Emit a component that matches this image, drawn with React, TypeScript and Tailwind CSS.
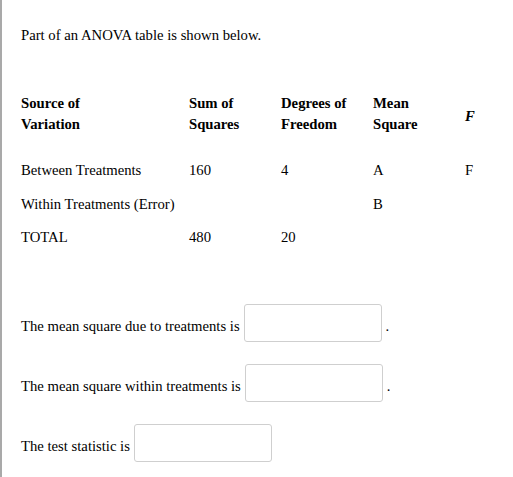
const rows = [
  { source: "Between Treatments", ss: "160", df: "4", ms: "A", f: "F" },
  { source: "Within Treatments (Error)", ss: "", df: "", ms: "B", f: "" },
  { source: "TOTAL", ss: "480", df: "20", ms: "", f: "" },
];

const questions = [
  { label: "The mean square due to treatments is", period: true },
  { label: "The mean square within treatments is", period: true },
  { label: "The test statistic is", period: false },
];

const App = () => {
  return (
    <div className="min-h-[477px] w-[513px] bg-white border-l-2 border-[#a9a9a9] pl-[19px] pt-[25px] text-[14.7px] text-black font-['Liberation_Serif','Times_New_Roman',serif]">
      <p className="leading-[20px]">Part of an ANOVA table is shown below.</p>

      {/* Table header */}
      <div className="mt-[48px] grid grid-cols-[168px_92px_92px_92px_auto] font-bold leading-[21px]">
        <div>
          Source of
          <br />
          Variation
        </div>
        <div>
          Sum of
          <br />
          Squares
        </div>
        <div>
          Degrees of
          <br />
          Freedom
        </div>
        <div>
          Mean
          <br />
          Square
        </div>
        <div className="italic leading-[42px] pt-[2px]">F</div>
      </div>

      {/* Table body */}
      <div className="mt-[17px]">
        {rows.map((row, index) => (
          <div
            key={index}
            className="grid grid-cols-[168px_92px_92px_92px_auto] h-[33.5px] leading-[33px]"
          >
            <div>{row.source}</div>
            <div>{row.ss}</div>
            <div>{row.df}</div>
            <div>{row.ms}</div>
            <div>{row.f}</div>
          </div>
        ))}
      </div>

      {/* Questions */}
      <div className="mt-[49px] flex flex-col gap-[22px]">
        {questions.map((q, index) => (
          <div key={index} className="flex items-start">
            <span className="leading-[20px] mt-[12px] whitespace-nowrap">{q.label}</span>
            <input
              type="text"
              className="ml-[4px] h-[38px] w-[138px] rounded-[3px] border border-[#cfcfcf] bg-white outline-none"
            />
            {q.period && <span className="leading-[20px] mt-[12px] ml-[4px]">.</span>}
          </div>
        ))}
      </div>
    </div>
  );
};

export default App;
